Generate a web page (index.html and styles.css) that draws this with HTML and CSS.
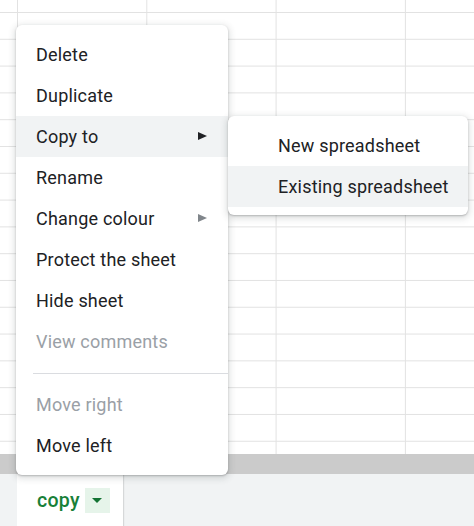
FILE: index.html
```html
<!DOCTYPE html>
<html lang="en">
<head>
    <meta charset="UTF-8">
    <meta name="viewport" content="width=device-width, initial-scale=1.0">
    <title>Sheet menu</title>
    <link rel="stylesheet" href="styles.css">
</head>
<body>
    <div class="sheet">
        <div class="grid"></div>
        <div class="scrollbar"></div>
        <div class="tabbar">
            <div class="tab">
                <span class="tab-name">copy</span>
                <span class="tab-drop"><span class="down"></span></span>
            </div>
        </div>

        <ul class="menu">
            <li class="item">Delete</li>
            <li class="item">Duplicate</li>
            <li class="item active">Copy to <span class="arrow"></span></li>
            <li class="item">Rename</li>
            <li class="item">Change colour <span class="arrow grey"></span></li>
            <li class="item">Protect the sheet</li>
            <li class="item">Hide sheet</li>
            <li class="item disabled">View comments</li>
            <li class="sep"></li>
            <li class="item disabled">Move right</li>
            <li class="item">Move left</li>
        </ul>

        <ul class="menu submenu">
            <li class="item">New spreadsheet</li>
            <li class="item active">Existing spreadsheet</li>
        </ul>
    </div>
</body>
</html>
```

FILE: styles.css
```css
body {
    margin: 0;
    font-family: Roboto, "Noto Sans", Arial, sans-serif;
    color: #202124;
    background-color: #fff;
}

.sheet {
    position: relative;
    width: 474px;
    height: 526px;
    overflow: hidden;
    display: flex;
    flex-direction: column;
}

.grid {
    height: 454px;
    background-color: #fff;
    background-image:
        linear-gradient(to bottom, #e2e2e2 0, #e2e2e2 1px, transparent 1px),
        linear-gradient(to right, #e2e2e2 0, #e2e2e2 1px, transparent 1px);
    background-size: 100% 26.8px, 129.3px 100%;
    background-position: 0 12px, 17px 0;
}

.scrollbar {
    height: 20px;
    background-color: #cbcbcb;
}

.tabbar {
    flex: 1;
    background-color: #f1f3f4;
    padding-left: 17px;
    display: flex;
}

.tab {
    width: 106px;
    background-color: #fff;
    box-shadow: 1px 0 1px rgba(60, 64, 67, 0.15);
    display: flex;
    align-items: center;
    padding: 0 0 0 20px;
    box-sizing: border-box;
}

.tab-name {
    color: #188038;
    font-size: 19.5px;
    font-weight: 500;
    letter-spacing: 0.3px;
}

.tab-drop {
    width: 25px;
    height: 25px;
    margin-left: 5px;
    background-color: #e6f4ea;
    display: flex;
    align-items: center;
    justify-content: center;
}

.down {
    width: 0;
    height: 0;
    border-left: 5px solid transparent;
    border-right: 5px solid transparent;
    border-top: 5px solid #137333;
}

.menu {
    position: absolute;
    left: 16px;
    top: 25px;
    width: 212px;
    margin: 0;
    padding: 9px 0 9px;
    list-style: none;
    background-color: #fff;
    border-radius: 6px;
    box-shadow: 0 2px 6px 2px rgba(60, 64, 67, 0.15), 0 1px 2px rgba(60, 64, 67, 0.3);
}

.submenu {
    left: 228px;
    top: 116px;
    width: 240px;
    padding: 9px 0 8px;
}

.item {
    height: 41px;
    display: flex;
    align-items: center;
    padding-left: 20px;
    font-size: 18px;
    letter-spacing: 0.2px;
    position: relative;
}

.submenu .item {
    padding-left: 50px;
}

.item.active {
    background-color: #f1f3f4;
}

.item.disabled {
    color: #9aa0a6;
}

.arrow {
    position: absolute;
    left: 182px;
    top: 16px;
    width: 0;
    height: 0;
    border-top: 4.5px solid transparent;
    border-bottom: 4.5px solid transparent;
    border-left: 9px solid #202124;
}

.arrow.grey {
    border-left-color: #80868b;
}

.sep {
    height: 1px;
    margin: 11px 0 10px 17px;
    background-color: #dadce0;
}
```
